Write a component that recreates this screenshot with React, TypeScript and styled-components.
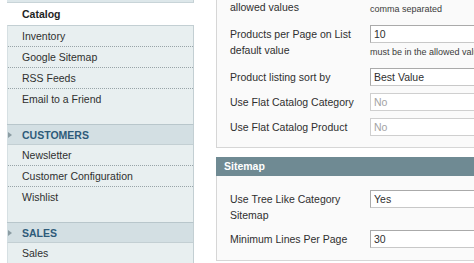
import React from "react";
import styled, { createGlobalStyle } from "styled-components";

const GlobalStyle = createGlobalStyle`
  html, body { margin: 0; padding: 0; background: #ffffff; overflow: hidden; }
  body {
    font-family: "Liberation Sans", Arial, sans-serif;
    font-size: 10.5px;
    color: #2f2f2f;
  }
  * { box-sizing: border-box; }
`;

const Page = styled.div`
  display: flex;
  align-items: flex-start;
  width: 474px;
  height: 263px;
  overflow: hidden;
`;

/* ---------- sidebar ---------- */
const Sidebar = styled.nav`
  flex: 0 0 187px;
  margin-left: 7px;
`;

const TopStrip = styled.div`
  height: 3px;
  background: #dde7ea;
  border-bottom: 1px solid #c8d4d8;
  border-right: 1px solid #c5d1d5;
`;

const ActiveItem = styled.div`
  height: 22px;
  line-height: 22px;
  padding-left: 15px;
  background: #ffffff;
  font-weight: bold;
  color: #1f1f1f;
`;

const ItemList = styled.ul`
  list-style: none;
  margin: 0;
  padding: 0 0 15px 0;
  background: #e8eff0;
  border-top: 1px solid #c3cfd3;
  border-right: 1px solid #c3cfd3;
  border-left: 1px solid #d6e0e3;
`;

const Item = styled.li`
  height: 21px;
  line-height: 20px;
  padding-left: 14px;
  border-bottom: 1px dotted #98a4a8;
  color: #2f2f2f;
  &:last-child {
    border-bottom: none;
    height: 20px;
  }
`;

const GroupHeader = styled.div`
  display: flex;
  align-items: center;
  height: 20px;
  border-top: 1px solid #b8c6cb;
  border-right: 1px solid #c3cfd3;
  background: #d3dfe3;
  padding-left: 1px;
  font-weight: bold;
  text-transform: uppercase;
  color: #2e5b7a;
`;

const Arrow = styled.span`
  width: 0;
  height: 0;
  margin-right: 10px;
  border-top: 3.5px solid transparent;
  border-bottom: 3.5px solid transparent;
  border-left: 4px solid #8b9ca3;
`;

/* ---------- content ---------- */
const Content = styled.main`
  flex: 0 0 430px;
  margin-left: 22px;
`;

const Fieldset = styled.div`
  margin-top: -40px;
  padding: 17px 0 8px 13px;
  background: #fafafa;
  border: 1px solid #d6d6d6;
`;

const SectionHead = styled.div`
  margin-top: 9px;
  height: 19px;
  line-height: 19px;
  padding-left: 8px;
  background: #6f8a93;
  color: #ffffff;
  font-weight: bold;
`;

const SectionBody = styled.div`
  padding: 10px 0 9px 13px;
  background: #fafafa;
  border: 1px solid #d6d6d6;
  border-top: none;
`;

const Row = styled.div`
  display: grid;
  grid-template-columns: 140px 1fr;
  padding: 4px 0 3px 0;
`;

const Label = styled.div`
  padding-top: 1px;
  padding-right: 8px;
  line-height: 16px;
  color: #2f2f2f;
`;

const Value = styled.div`
  display: flex;
  flex-direction: column;
`;

const fieldBase = `
  width: 280px;
  height: 18px;
  margin: 0;
  padding: 0 3px;
  font-family: "Liberation Sans", Arial, sans-serif;
  font-size: 10.5px;
  line-height: 16px;
  color: #2f2f2f;
  background: #ffffff;
  border: 1px solid;
  border-color: #aaaaaa #c8c8c8 #c8c8c8 #aaaaaa;
  border-radius: 0;
  outline: none;
`;

const TextInput = styled.input`
  ${fieldBase}
`;

const Select = styled.select`
  ${fieldBase}
  appearance: none;
  -webkit-appearance: none;
  &:disabled {
    color: #a3a3a3;
    background: #ffffff;
    border-color: #cfcfcf;
    opacity: 1;
  }
`;

const Note = styled.div`
  margin-top: 3px;
  padding-bottom: 2px;
  font-size: 9px;
  line-height: 13px;
  color: #3a3a3a;
  white-space: nowrap;
`;

type GroupProps = { title: string; items: string[] };

const Group: React.FC<GroupProps> = ({ title, items }) => (
  <>
    <GroupHeader>
      <Arrow />
      {title}
    </GroupHeader>
    <ItemList>
      {items.map((it) => (
        <Item key={it}>{it}</Item>
      ))}
    </ItemList>
  </>
);

export default function App() {
  return (
    <>
      <GlobalStyle />
      <Page>
        <Sidebar>
          <TopStrip />
          <ActiveItem>Catalog</ActiveItem>
          <ItemList>
            <Item>Inventory</Item>
            <Item>Google Sitemap</Item>
            <Item>RSS Feeds</Item>
            <Item>Email to a Friend</Item>
          </ItemList>
          <Group
            title="Customers"
            items={["Newsletter", "Customer Configuration", "Wishlist"]}
          />
          <Group title="Sales" items={["Sales"]} />
        </Sidebar>

        <Content>
          <Fieldset>
            <Row>
              <Label>Products per Page on Grid allowed values</Label>
              <Value>
                <TextInput readOnly value="9,15,30" />
                <Note>comma separated</Note>
              </Value>
            </Row>
            <Row>
              <Label>Products per Page on List default value</Label>
              <Value>
                <TextInput readOnly value="10" />
                <Note>must be in the allowed values list</Note>
              </Value>
            </Row>
            <Row>
              <Label>Product listing sort by</Label>
              <Value>
                <Select defaultValue="price">
                  <option value="price">Best Value</option>
                </Select>
              </Value>
            </Row>
            <Row>
              <Label>Use Flat Catalog Category</Label>
              <Value>
                <Select disabled defaultValue="0">
                  <option value="0">No</option>
                </Select>
              </Value>
            </Row>
            <Row>
              <Label>Use Flat Catalog Product</Label>
              <Value>
                <Select disabled defaultValue="0">
                  <option value="0">No</option>
                </Select>
              </Value>
            </Row>
          </Fieldset>

          <SectionHead>Sitemap</SectionHead>
          <SectionBody>
            <Row>
              <Label>Use Tree Like Category Sitemap</Label>
              <Value>
                <Select defaultValue="1">
                  <option value="1">Yes</option>
                </Select>
              </Value>
            </Row>
            <Row>
              <Label>Minimum Lines Per Page</Label>
              <Value>
                <TextInput readOnly value="30" />
              </Value>
            </Row>
          </SectionBody>
        </Content>
      </Page>
    </>
  );
}
